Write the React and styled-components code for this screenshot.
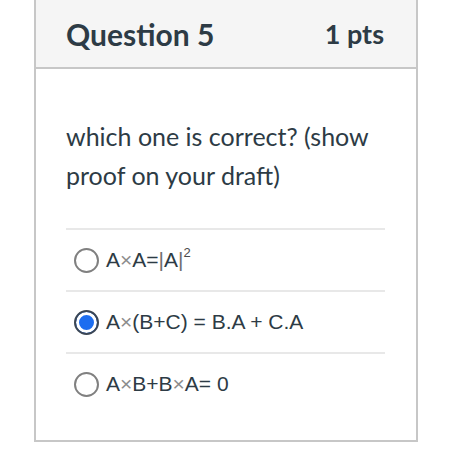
import React from 'react'
import styled, { createGlobalStyle } from 'styled-components'

const GlobalStyle = createGlobalStyle`
  html, body {
    margin: 0;
    padding: 0;
    background: #ffffff;
  }
  body {
    font-family: Lato, "Open Sans", "Liberation Sans", sans-serif;
    color: #2d3b45;
  }
`

const Times = styled.span`
  color: #8c8c8c;
`

const Bar = styled.span`
  color: #6f6f6f;
`

const options = [
  { id: 1, label: <>A<Times>×</Times>A=<Bar>|</Bar>A<Bar>|</Bar><sup>2</sup></>, checked: false },
  { id: 2, label: <>A<Times>×</Times>(B+C) = B.A + C.A</>, checked: true },
  { id: 3, label: <>A<Times>×</Times>B+B<Times>×</Times>A= 0</>, checked: false },
]

export default function App() {
  return (
    <>
      <GlobalStyle />
      <Page>
        <Card>
          <Header>
            <Title>Question 5</Title>
            <Points>1 pts</Points>
          </Header>
          <Body>
            <QuestionText>which one is correct? (show proof on your draft)</QuestionText>
            <Answers>
              {options.map(o => (
                <Answer key={o.id}>
                  <Radio checked={o.checked} />
                  <AnswerLabel>{o.label}</AnswerLabel>
                </Answer>
              ))}
            </Answers>
          </Body>
        </Card>
      </Page>
    </>
  )
}

// STYLES
const Page = styled.div`
  width: 474px;
  height: 453px;
  padding-left: 34px;
  box-sizing: border-box;
`

const Card = styled.div`
  width: 384px;
  height: 442px;
  box-sizing: border-box;
  border: 2px solid #c7c7c7;
  border-top: none;
  display: flex;
  flex-direction: column;
`

const Header = styled.div`
  height: 69px;
  box-sizing: border-box;
  background: #f5f5f5;
  border-bottom: 2px solid #c7c7c7;
  display: flex;
  align-items: center;
  justify-content: space-between;
  padding: 0 32px 0 30px;
`

const Title = styled.h2`
  margin: 0;
  font-size: 30px;
  font-weight: 700;
  color: #2d3b45;
`

const Points = styled.span`
  font-size: 27px;
  font-weight: 700;
  color: #2d3b45;
`

const Body = styled.div`
  padding: 48px 31px 0 30px;
`

const QuestionText = styled.p`
  margin: 0;
  font-size: 25px;
  line-height: 39px;
  color: #2d3b45;
  padding-right: 10px;
`

const Answers = styled.div`
  margin-top: 33px;
  border-top: 2px solid #e8e8e8;
`

const Answer = styled.div`
  display: flex;
  align-items: center;
  gap: 7px;
  height: 60px;
  padding-left: 8px;
  border-bottom: 2px solid #e8e8e8;
  &:last-child {
    border-bottom: none;
  }
`

const Radio = styled.span`
  width: 25px;
  height: 25px;
  box-sizing: border-box;
  border-radius: 50%;
  border: 2px solid ${p => (p.checked ? '#3b4654' : '#808080')};
  background: ${p => (p.checked ? '#1c6df0' : '#ffffff')};
  box-shadow: ${p => (p.checked ? 'inset 0 0 0 3px #ffffff' : 'none')};
  flex-shrink: 0;
`

const AnswerLabel = styled.span`
  font-family: "Liberation Sans", Arial, sans-serif;
  font-size: 21px;
  color: #2d3b45;
  sup {
    font-size: 13px;
    vertical-align: top;
    position: relative;
    top: -3px;
    color: #4a4a4a;
  }
`
